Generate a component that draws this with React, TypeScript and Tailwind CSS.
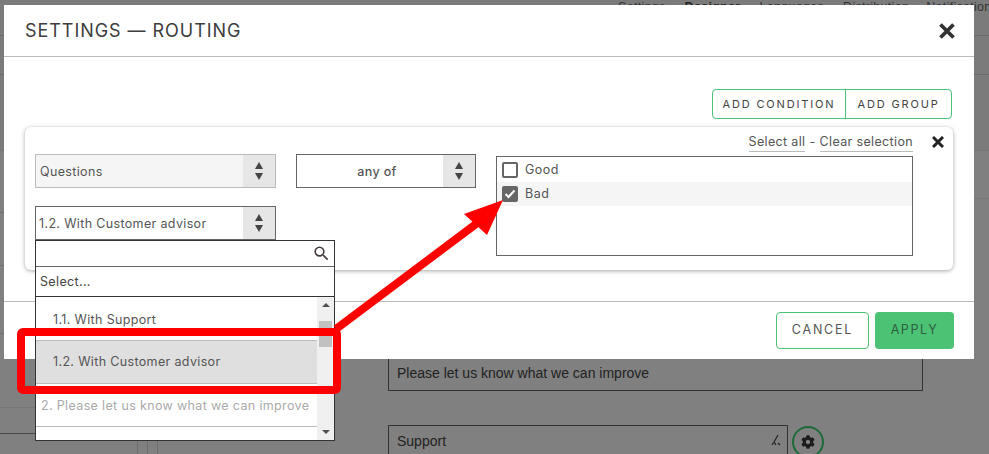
import React from 'react';
import { MdSearch } from 'react-icons/md';
import { FaCog } from 'react-icons/fa';

const uiFont = "font-['Inter','Noto_Sans',sans-serif]";

function Stepper() {
  return (
    <span className="flex h-full w-[32px] flex-shrink-0 flex-col items-center justify-center gap-[4px] bg-[#e6e6e6]">
      <svg width="8" height="7" viewBox="0 0 8 7"><path d="M4 0L8 7H0z" fill="#444" /></svg>
      <svg width="8" height="7" viewBox="0 0 8 7"><path d="M4 7L8 0H0z" fill="#444" /></svg>
    </span>
  );
}

function SelectBox({ label, width, disabled, textClass }: { label: string; width: string; disabled?: boolean; textClass: string }) {
  return (
    <div className={`flex h-[34px] ${width} items-center border ${disabled ? 'border-[#bbb] bg-[#f5f5f5]' : 'border-[#666] bg-white'}`}>
      <span className={`flex-1 truncate pt-[2px] text-[12.5px] tracking-[0.35px] text-[#555] ${textClass}`}>{label}</span>
      <Stepper />
    </div>
  );
}

function CheckRow({ label, checked }: { label: string; checked?: boolean }) {
  return (
    <div className={`flex h-[24px] items-center gap-[7px] pl-[5px] ${checked ? 'bg-[#f5f5f5]' : ''}`}>
      {checked ? (
        <span className="flex h-[16px] w-[16px] items-center justify-center rounded-[2px] bg-[#666]">
          <svg width="12" height="10" viewBox="0 0 12 10"><path d="M1.5 5l3 3 6-6.5" fill="none" stroke="#fff" strokeWidth="2" /></svg>
        </span>
      ) : (
        <span className="h-[16px] w-[16px] rounded-[2px] border-2 border-[#666] bg-white" />
      )}
      <span className="text-[12.5px] tracking-[0.5px] text-[#555]">{label}</span>
    </div>
  );
}

function QuestionDropdown() {
  return (
    <div className="absolute left-0 top-[34px] z-10 flex h-[201px] w-[300px] flex-col border border-[#333] bg-white">
      <div className="flex h-[26px] flex-shrink-0 items-center justify-end border-b border-[#666] pr-[3px]">
        <MdSearch size={19} color="#443c3c" />
      </div>
      <div className="flex h-[30px] flex-shrink-0 items-center border-b border-[#333] pl-[4px] pt-[1px] text-[12.5px] tracking-[0.35px] text-[#444]">
        Select...
      </div>
      <div className="flex min-h-0 flex-1">
        <div className="flex-1 text-[12.5px] tracking-[0.35px]">
          <div className="flex h-[44px] items-center border-b border-[#bbb] pl-[17px] pt-[3px] text-[#555]">1.1. With Support</div>
          <div className="flex h-[43px] items-center border-b border-[#bbb] bg-[#dfdfdf] pl-[17px] text-[#555]">1.2. With Customer advisor</div>
          <div className="flex h-[43px] items-center whitespace-nowrap border-b border-[#bbb] pl-[5px] pt-[2px] text-[#aaa]">2. Please let us know what we can improve</div>
        </div>
        <div className="flex w-[17px] flex-shrink-0 flex-col items-center justify-between bg-[#f0f0f0] py-[6px]">
          <svg width="8" height="4" viewBox="0 0 8 4"><path d="M4 0l4 4H0z" fill="#505050" /></svg>
          <svg width="8" height="4" viewBox="0 0 8 4"><path d="M4 4l4-4H0z" fill="#505050" /></svg>
        </div>
      </div>
      <div className="absolute right-[2px] top-[80px] h-[26px] w-[13px] bg-[#c1c1c1]" />
    </div>
  );
}

function RoutingModal() {
  return (
    <div className={`absolute left-[4px] top-[5px] z-10 flex h-[354px] w-[970px] flex-col bg-white ${uiFont}`}>
      <div className="flex h-[52px] flex-shrink-0 items-center justify-between border-b border-[#bbb] pl-[21px] pr-[19px]">
        <h1 className="text-[18px] font-normal tracking-[0.95px] text-[#3d3d3d]">SETTINGS — ROUTING</h1>
        <svg width="16" height="16" viewBox="0 0 16 16"><path d="M1.5 1.5l13 13M14.5 1.5l-13 13" stroke="#333" strokeWidth="3.8" /></svg>
      </div>

      <div className="flex-1 px-[21px] pt-[32px]">
        <div className="flex justify-end pr-[1px]">
          <div className="flex h-[30px] rounded-[4px] border border-[#4bc274] text-[11px] tracking-[1.85px] text-[#444]">
            <button className="w-[133px] border-r border-[#4bc274]">ADD CONDITION</button>
            <button className="w-[105px]">ADD GROUP</button>
          </div>
        </div>

        <div className="mt-[8px] flex h-[143px] rounded-[6px] bg-white pl-[10px] shadow-[0_1px_4px_rgba(0,0,0,0.35)]">
          <div className="flex w-[241px] flex-col gap-[18px] pt-[27px]">
            <SelectBox label="Questions" width="w-[241px]" textClass="pl-[4px]" disabled />
            <div className="relative">
              <SelectBox label="1.2. With Customer advisor" width="w-[241px]" textClass="pl-[3px]" />
              <QuestionDropdown />
            </div>
          </div>
          <div className="ml-[20px] pt-[27px]">
            <SelectBox label="any of" width="w-[180px]" textClass="pl-[14px] text-center font-medium" />
          </div>
          <div className="ml-[20px] w-[417px] pt-[5px]">
            <div className="flex h-[24px] items-start justify-end text-[12.5px] tracking-[0.35px] text-[#555]">
              <span className="h-[20px] border-b border-[#bbb] pt-[1px] leading-[18px]">Select all</span>
              <span className="mx-[4px] pt-[1px] leading-[18px]">-</span>
              <span className="h-[20px] border-b border-[#bbb] pt-[1px] leading-[18px]">Clear selection</span>
            </div>
            <div className="h-[100px] border border-[#666] pt-[1px]">
              <CheckRow label="Good" />
              <CheckRow label="Bad" checked />
            </div>
          </div>
          <div className="ml-[19px] pt-[9px]">
            <svg width="12" height="12" viewBox="0 0 12 12"><path d="M1 1l10 10M11 1L1 11" stroke="#222" strokeWidth="3" /></svg>
          </div>
        </div>
      </div>

      <div className="flex h-[58px] flex-shrink-0 justify-end gap-[6px] border-t border-[#bbb] pr-[20px] pt-[10px]">
        <button className="h-[37px] w-[93px] rounded-[4px] border border-[#4bc274] text-[12.5px] tracking-[1.8px] text-[#555]">CANCEL</button>
        <button className="h-[37px] w-[79px] rounded-[4px] bg-[#4bc274] text-[12.5px] tracking-[1.6px] text-[#2f5f40]">APPLY</button>
      </div>
    </div>
  );
}

function Annotation() {
  return (
    <svg className="absolute left-0 top-0 z-20" width="989" height="454" viewBox="0 0 989 454">
      <rect x="21" y="332" width="316" height="58" rx="2" fill="none" stroke="#f00" strokeWidth="8" />
      <path d="M336 329L480 221" stroke="#f00" strokeWidth="8" />
      <path d="M503 200L464 214L487 235z" fill="#f00" />
    </svg>
  );
}

function PageBehind() {
  return (
    <div className="flex h-full flex-col font-['Liberation_Sans',sans-serif] text-[#222]">
      <div className="flex h-[36px] flex-shrink-0 gap-[19px] border-b border-[#6a6a6a] bg-[#7b7b7b] pl-[618px] text-[12.5px] leading-[14px] tracking-[0.3px] text-[#333]">
        <span>Settings</span>
        <span className="font-bold text-[#222]">Designer</span>
        <span>Languages</span>
        <span>Distribution</span>
        <span className="-ml-[2px]">Notifications</span>
      </div>
      <div className="h-[39px] flex-shrink-0 border-b border-[#6a6a6a] bg-[#7b7b7b]" />
      <div className="flex min-h-0 flex-1">
        <div className="w-[138px] flex-shrink-0 border-r border-[#6e6e6e]">
          <div className="h-[76px] border-b border-[#777] bg-[#7b7b7b]" />
          <div className="h-[62px] border-b border-[#707070]" />
          <div className="h-[53px] border-b border-[#707070]" />
          <div className="h-[68px] border-b border-[#707070]" />
          <div className="h-[74px] border-b border-[#777]" />
          <div className="h-[26px] w-[36px] border-b border-[#4a4a4a]" />
        </div>
        <div className="w-[10px] flex-shrink-0 border-r border-[#6e6e6e]" />
        <div className="w-[10px] flex-shrink-0 border-r border-[#6e6e6e]" />
        <div className="flex flex-1 flex-col pl-[230px]">
          <div className="flex h-[316px] w-[535px] flex-shrink-0 items-end border border-[#333] pb-[8px] pl-[8px] text-[14px] leading-[18px]">
            Please let us know what we can improve
          </div>
          <div className="mt-[34px] flex items-start">
            <div className="flex h-[40px] w-[400px] items-start justify-between border border-[#333] pl-[8px] pr-[6px] pt-[6px] text-[14px] leading-[18px]">
              Support
              <svg className="mt-[2px]" width="10" height="12" viewBox="0 0 10 12"><path d="M7 1L3 8M1 11l2-3 2 3M7 9l2 2" fill="none" stroke="#222" strokeWidth="1.2" /></svg>
            </div>
            <div className="ml-[4px] mt-[1px] flex h-[32px] w-[32px] items-center justify-center rounded-full border-2 border-[#1d6b36]">
              <FaCog size={14} color="#1c1c1c" />
            </div>
          </div>
        </div>
        <div className="w-[15px] flex-shrink-0">
          <div className="h-[76px] border-b border-[#777] bg-[#7b7b7b]" />
          <div className="h-[48px] border-b border-[#777]" />
        </div>
      </div>
    </div>
  );
}

export default function App() {
  return (
    <div className="relative h-[454px] w-[989px] overflow-hidden bg-[#808080]">
      <PageBehind />
      <RoutingModal />
      <Annotation />
    </div>
  );
}
